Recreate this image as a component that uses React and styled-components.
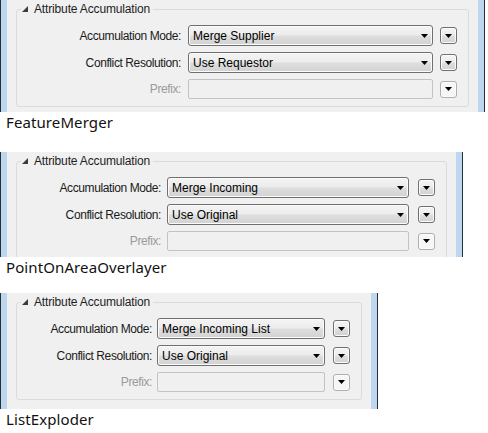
import React from 'react'
import styled, { createGlobalStyle } from 'styled-components'

const GlobalStyle = createGlobalStyle`
  html, body {
    margin: 0;
    padding: 0;
    background: #ffffff;
  }
`;

const Page = styled.div`
  display: flex;
  flex-direction: column;
  align-items: flex-start;
  width: 488px;
  font-family: "Liberation Sans", Arial, sans-serif;
`;

const Frame = styled.div`
  width: ${({ width }) => width}px;
  box-sizing: border-box;
  border-left: 1px solid #22303e;
  border-right: 1px solid #22303e;
  background: #bed6ee;
  padding: 0 6px;
`;

const Body = styled.div`
  height: ${({ height }) => height}px;
  overflow: hidden;
  background: #f0f0f0;
  display: flex;
  flex-direction: column;
  padding-top: ${({ top }) => top}px;
  box-sizing: border-box;
`;

const Group = styled.fieldset`
  margin: 0 9px 0 9px;
  padding: 9px 11px 7px 0;
  border: 1px solid #d5dde3;
  border-radius: 3px;
  min-width: 0;
  display: flex;
  flex-direction: column;
  gap: 6px;
`;

const Legend = styled.legend`
  display: flex;
  align-items: center;
  gap: 6px;
  margin-left: 4px;
  padding: 0 3px 0 1px;
  height: 14px;
  font-size: 12px;
  line-height: 14px;
  letter-spacing: -0.15px;
  color: #1e1e1e;
`;

const Row = styled.div`
  display: flex;
  align-items: center;
  height: ${({ h }) => h || 21}px;
`;

const Label = styled.div`
  width: ${({ w }) => w}px;
  flex: none;
  text-align: right;
  font-size: 12px;
  letter-spacing: -0.4px;
  color: ${({ disabled }) => (disabled ? '#9a9a9a' : '#1a1a1a')};
  margin-right: ${({ gap }) => gap}px;
  white-space: nowrap;
`;

const Combo = styled.div`
  flex: 1;
  height: 21px;
  box-sizing: border-box;
  border: 1px solid #707070;
  border-radius: 3px;
  background: linear-gradient(to bottom, #f4f4f4 0%, #ececec 48%, #dedede 52%, #d2d2d2 100%);
  box-shadow: inset 0 0 0 1px #fbfbfb;
  display: flex;
  align-items: center;
  padding: 0 4px 0 4px;
  font-size: 12px;
  color: #000;
`;

const ComboText = styled.span`
  flex: 1;
  white-space: nowrap;
  overflow: hidden;
`;

const Field = styled.div`
  flex: 1;
  height: 20px;
  box-sizing: border-box;
  border: 1px solid #c3c3c3;
  border-radius: 2px;
  background: #f0f0f0;
`;

const SmallButton = styled.div`
  flex: none;
  width: 17px;
  height: 17px;
  box-sizing: border-box;
  margin-left: ${({ gap }) => gap}px;
  border: 1px solid ${({ disabled }) => (disabled ? '#acb0b4' : '#707070')};
  border-radius: 3px;
  background: ${({ disabled }) =>
    disabled
      ? '#f6f6f6'
      : 'linear-gradient(to bottom, #f4f4f4 0%, #ececec 48%, #dedede 52%, #d2d2d2 100%)'};
  box-shadow: inset 0 0 0 1px #fcfcfc;
  display: flex;
  align-items: center;
  justify-content: center;
`;

const Caption = styled.div`
  font-family: "Noto Sans", "Open Sans", sans-serif;
  font-size: 15px;
  line-height: 20px;
  letter-spacing: 0.1px;
  color: #111;
  padding-left: 6px;
  margin-bottom: ${({ mb }) => mb}px;
`;

const Arrow = () => (
  <svg width="7" height="4" viewBox="0 0 7 4">
    <polygon points="0,0 7,0 3.5,4" fill="#000" />
  </svg>
);

const Expander = () => (
  <svg width="6" height="6" viewBox="0 0 6 6">
    <polygon points="6,0 6,6 0,6" fill="#3c3c3c" />
  </svg>
);

const panels = [
  { name: 'FeatureMerger', width: 485, height: 112, top: 2, labelW: 164, gap: 7, btnGap: 7, mode: 'Merge Supplier', conflict: 'Use Requestor', mb: 20 },
  { name: 'PointOnAreaOverlayer', width: 463, height: 105, top: 2, labelW: 144, gap: 6, btnGap: 9, mode: 'Merge Incoming', conflict: 'Use Original', mb: 16 },
  { name: 'ListExploder', width: 378, height: 116, top: 2, labelW: 135, gap: 5, btnGap: 8, mode: 'Merge Incoming List', conflict: 'Use Original', mb: 0 },
];

const AccumulationPanel = ({ p }) => (
  <>
    <Frame width={p.width}>
      <Body height={p.height} top={p.top}>
        <Group>
          <Legend>
            <Expander />
            Attribute Accumulation
          </Legend>
          <Row>
            <Label w={p.labelW} gap={p.gap}>Accumulation Mode:</Label>
            <Combo>
              <ComboText>{p.mode}</ComboText>
              <Arrow />
            </Combo>
            <SmallButton gap={p.btnGap}><Arrow /></SmallButton>
          </Row>
          <Row>
            <Label w={p.labelW} gap={p.gap}>Conflict Resolution:</Label>
            <Combo>
              <ComboText>{p.conflict}</ComboText>
              <Arrow />
            </Combo>
            <SmallButton gap={p.btnGap}><Arrow /></SmallButton>
          </Row>
          <Row h={20}>
            <Label w={p.labelW} gap={p.gap} disabled>Prefix:</Label>
            <Field />
            <SmallButton gap={p.btnGap} disabled><Arrow /></SmallButton>
          </Row>
        </Group>
      </Body>
    </Frame>
    <Caption mb={p.mb}>{p.name}</Caption>
  </>
);

const App = () => (
  <>
    <GlobalStyle />
    <Page>
      {panels.map((p) => (
        <AccumulationPanel key={p.name} p={p} />
      ))}
    </Page>
  </>
);

export default App
